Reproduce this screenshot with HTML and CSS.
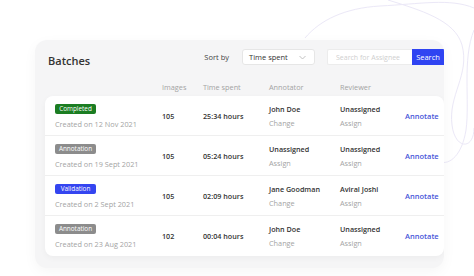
FILE: index.html
```html
<!DOCTYPE html>
<html lang="en">
<head>
    <meta charset="UTF-8">
    <title>Batches</title>
    <link rel="stylesheet" href="styles.css">
</head>
<body>
    <svg class="swirl" width="474" height="276" viewBox="0 0 474 276">
        <path d="M305 38 C320 20 345 8 380 6 C420 4 450 -2 474 8" />
        <path d="M388 0 C420 10 455 20 462 45 C470 75 448 95 452 125 C455 150 474 150 474 128" />
        <path d="M474 30 C462 60 470 100 466 130 C462 155 450 165 440 162" />
    </svg>

    <main class="panel">
        <div class="panel-top">
            <h2 class="panel-title">Batches</h2>
            <span class="sort-label">Sort by</span>
            <div class="select">
                <span>Time spent</span>
                <svg width="7" height="5" viewBox="0 0 7 5"><path d="M0.5 1 L3.5 4 L6.5 1" /></svg>
            </div>
            <div class="search">
                <input class="search-input" type="text" placeholder="Search for Assignee">
                <button class="search-btn">Search</button>
            </div>
        </div>

        <div class="grid head-row">
            <span></span>
            <span>Images</span>
            <span>Time spent</span>
            <span>Annotator</span>
            <span>Reviewer</span>
            <span></span>
        </div>

        <div class="card">
            <div class="grid row">
                <div class="batch">
                    <span class="badge badge-green">Completed</span>
                    <span class="muted">Created on 12 Nov 2021</span>
                </div>
                <span class="strong">105</span>
                <span class="strong">25:34 hours</span>
                <div class="person"><span class="strong">John Doe</span><span class="muted">Change</span></div>
                <div class="person"><span class="strong">Unassigned</span><span class="muted">Assign</span></div>
                <a href="#" class="annotate">Annotate</a>
            </div>
            <div class="grid row">
                <div class="batch">
                    <span class="badge badge-gray">Annotation</span>
                    <span class="muted">Created on 19 Sept 2021</span>
                </div>
                <span class="strong">105</span>
                <span class="strong">05:24 hours</span>
                <div class="person"><span class="strong">Unassigned</span><span class="muted">Assign</span></div>
                <div class="person"><span class="strong">Unassigned</span><span class="muted">Assign</span></div>
                <a href="#" class="annotate">Annotate</a>
            </div>
            <div class="grid row">
                <div class="batch">
                    <span class="badge badge-blue">Validation</span>
                    <span class="muted">Created on 2 Sept 2021</span>
                </div>
                <span class="strong">105</span>
                <span class="strong">02:09 hours</span>
                <div class="person"><span class="strong">Jane Goodman</span><span class="muted">Change</span></div>
                <div class="person"><span class="strong">Aviral Joshi</span><span class="muted">Assign</span></div>
                <a href="#" class="annotate">Annotate</a>
            </div>
            <div class="grid row">
                <div class="batch">
                    <span class="badge badge-gray">Annotation</span>
                    <span class="muted">Created on 23 Aug 2021</span>
                </div>
                <span class="strong">102</span>
                <span class="strong">00:04 hours</span>
                <div class="person"><span class="strong">John Doe</span><span class="muted">Change</span></div>
                <div class="person"><span class="strong">Unassigned</span><span class="muted">Assign</span></div>
                <a href="#" class="annotate">Annotate</a>
            </div>
        </div>
    </main>
</body>
</html>
```

FILE: styles.css
```css
:root {
    --blue: #2f44f2;
    --link: #4856d9;
    --text: #333;
    --muted: #a3a3a3;
    --line: #efefef;
}

* {
    box-sizing: border-box;
    margin: 0;
    padding: 0;
}

body {
    font-family: 'Open Sans', 'Liberation Sans', sans-serif;
    background: #fff;
    color: var(--text);
    width: 474px;
    height: 276px;
    overflow: hidden;
    position: relative;
}

.swirl {
    position: absolute;
    top: 0;
    left: 0;
    z-index: 0;
}

.swirl path {
    fill: none;
    stroke: #ebe8f7;
    stroke-width: 1;
}

.panel {
    position: relative;
    z-index: 1;
    margin: 40px 0 0 35px;
    width: 409px;
    height: 228px;
    padding-top: 9px;
    background: #f5f5f6;
    border-radius: 12px;
    overflow: hidden;
    box-shadow: 0 4px 14px rgba(0,0,0,0.04);
}

.panel-top {
    display: flex;
    align-items: center;
    height: 16px;
    padding-left: 13px;
}

.panel-title {
    font-size: 11px;
    font-weight: 600;
    color: #333;
    margin-top: 6px;
    flex: 1;
}

.sort-label {
    font-size: 7.5px;
    color: #444;
    margin-right: 13px;
}

.select {
    width: 73px;
    height: 16px;
    display: flex;
    align-items: center;
    justify-content: space-between;
    padding: 0 8px 0 6px;
    background: #fff;
    border: 1px solid #e6e6e6;
    border-radius: 3px;
    font-size: 7.5px;
    color: #333;
}

.select path {
    fill: none;
    stroke: #bbb;
    stroke-width: 0.9;
}

.search {
    display: flex;
    margin-left: 12px;
    height: 16px;
}

.search-input {
    width: 85px;
    height: 16px;
    border: 1px solid #ececec;
    border-right: none;
    border-radius: 2px 0 0 2px;
    padding: 0 8px;
    font-family: inherit;
    font-size: 7px;
    background: #fff;
    outline: none;
}

.search-input::placeholder {
    color: #cfcfcf;
}

.search-btn {
    width: 32px;
    height: 16px;
    border: none;
    background: var(--blue);
    color: #fff;
    font-family: inherit;
    font-size: 7.5px;
}

.grid {
    display: grid;
    grid-template-columns: 107px 41px 66px 71px 65px 1fr;
    align-items: center;
    padding-left: 10px;
}

.head-row {
    margin-left: 10px;
    height: 31px;
    align-items: end;
    padding-bottom: 4px;
    font-size: 7.3px;
    line-height: 10px;
    color: var(--muted);
}

.card {
    margin-left: 10px;
    background: #fff;
    border-radius: 8px;
    box-shadow: 0 2px 6px rgba(0,0,0,0.04);
}

.row {
    height: 40px;
    font-size: 7.2px;
    line-height: 10px;
    border-bottom: 1px solid var(--line);
}

.row:last-child {
    border-bottom: none;
}

.batch {
    display: flex;
    flex-direction: column;
    align-items: flex-start;
    gap: 5px;
    align-self: start;
    padding-top: 8px;
}

.badge {
    width: 41px;
    height: 10px;
    line-height: 10px;
    text-align: center;
    color: #fff;
    font-size: 6.4px;
    border-radius: 2px;
}

.badge-green {
    background: #1b7d22;
}

.badge-gray {
    background: #8c8c8c;
}

.badge-blue {
    background: #3445f0;
}

.muted {
    color: var(--muted);
    font-size: 7.3px;
}

.strong {
    font-weight: 600;
    color: #333;
}

.person {
    display: flex;
    flex-direction: column;
    gap: 4px;
}

.annotate {
    color: var(--link);
    font-weight: 600;
    font-size: 7.5px;
    text-decoration: none;
}
```
